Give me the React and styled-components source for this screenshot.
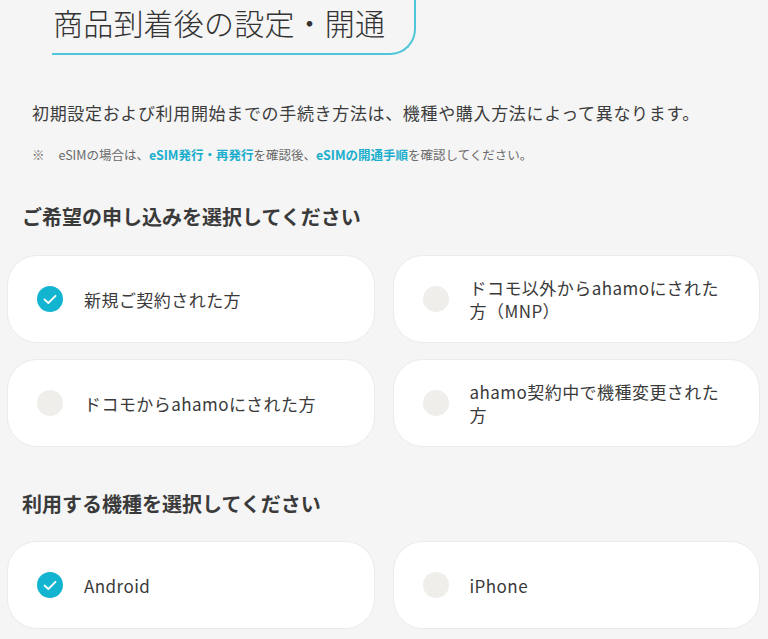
import React from "react";
import styled, { createGlobalStyle } from "styled-components";

const Global = createGlobalStyle`
  html, body { margin: 0; padding: 0; background: #f5f5f5; }
  body { font-family: "Noto Sans CJK JP", "Noto Sans", sans-serif; color: #3a3a3a; }
`;

const Page = styled.div`
  width: 768px;
  height: 639px;
  overflow: hidden;
  background: #f5f5f5;
  display: flex;
  flex-direction: column;
`;

const TitleBox = styled.div`
  margin-left: 52px;
  width: 362px;
  height: 53px;
  border-bottom: 2px solid #4ec5d9;
  border-right: 2px solid #4ec5d9;
  border-bottom-right-radius: 26px;
  display: flex;
  align-items: flex-start;
`;

const Title = styled.h1`
  margin: 0;
  padding-left: 1px;
  font-size: 30px;
  font-weight: 300;
  line-height: 44px;
  color: #333;
  letter-spacing: 0.2px;
`;

const Intro = styled.p`
  margin: 45px 0 0 32px;
  font-size: 17px;
  line-height: 26px;
  letter-spacing: 0.66px;
  color: #3c3c3c;
`;

const Note = styled.p`
  margin: 20px 0 0 32px;
  font-size: 12.5px;
  line-height: 18px;
  color: #6a6a6a;
`;

const Mark = styled.span`
  margin-right: 14px;
`;

const Link = styled.a`
  color: #1aaecd;
  font-weight: 700;
  text-decoration: none;
`;

const Heading = styled.h2`
  margin: ${(p) => p.$top}px 0 0 22px;
  font-size: 20px;
  font-weight: 700;
  line-height: 30px;
  color: #3a3a3a;
`;

const Grid = styled.div`
  margin-top: ${(p) => p.$top}px;
  padding: 0 8px 0 7px;
  display: grid;
  grid-template-columns: 1fr 1fr;
  column-gap: 18px;
  row-gap: 16px;
`;

const Card = styled.div`
  height: 88px;
  box-sizing: border-box;
  background: #fff;
  border: 1px solid #ecebe7;
  border-radius: 30px;
  display: flex;
  align-items: center;
  padding: 0 30px 0 29px;
  gap: 21px;
`;

const Radio = styled.span`
  flex: none;
  width: 26px;
  height: 26px;
  border-radius: 50%;
  background: ${(p) => (p.$on ? "#12b4d0" : "#efeeea")};
  display: flex;
  align-items: center;
  justify-content: center;
`;

const Label = styled.span`
  font-size: 17px;
  line-height: 23px;
  letter-spacing: 0.45px;
  color: #3a3a3a;
`;

const Check = () => (
  <svg width="14" height="11" viewBox="0 0 14 11" fill="none">
    <path d="M1.5 5.5 L5.3 9 L12.5 1.8" stroke="#fff" strokeWidth="1.8" strokeLinecap="round" strokeLinejoin="round" />
  </svg>
);

const Option = ({ on, children }) => (
  <Card>
    <Radio $on={on}>{on && <Check />}</Radio>
    <Label>{children}</Label>
  </Card>
);

export default function App() {
  return (
    <Page>
      <Global />
      <TitleBox>
        <Title>商品到着後の設定・開通</Title>
      </TitleBox>
      <Intro>初期設定および利用開始までの手続き方法は、機種や購入方法によって異なります。</Intro>
      <Note>
        <Mark>※</Mark>eSIMの場合は、<Link>eSIM発行・再発行</Link>を確認後、<Link>eSIMの開通手順</Link>を確認してください。
      </Note>
      <Heading $top={38}>ご希望の申し込みを選択してください</Heading>
      <Grid $top={23}>
        <Option on>新規ご契約された方</Option>
        <Option>ドコモ以外からahamoにされた方（MNP）</Option>
        <Option>ドコモからahamoにされた方</Option>
        <Option>ahamo契約中で機種変更された方</Option>
      </Grid>
      <Heading $top={42}>利用する機種を選択してください</Heading>
      <Grid $top={22}>
        <Option on>Android</Option>
        <Option>iPhone</Option>
      </Grid>
    </Page>
  );
}
